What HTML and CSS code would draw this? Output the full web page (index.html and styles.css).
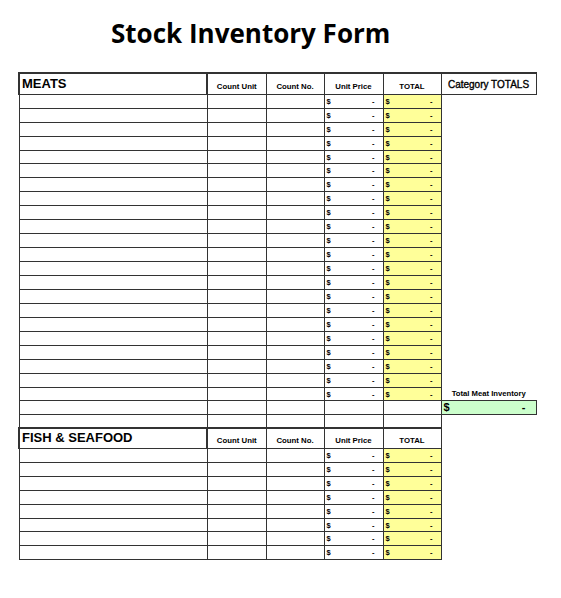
FILE: index.html
```html
<!DOCTYPE html>
<html>
<head>
<meta charset="utf-8">
<title>Stock Inventory Form</title>
<link rel="stylesheet" href="styles.css">
</head>
<body>
<div class="page">
  <h1 class="title">Stock Inventory Form</h1>
  <table class="sheet">
    <colgroup>
      <col class="c-a"><col class="c-b"><col class="c-c"><col class="c-d"><col class="c-e"><col class="c-f">
    </colgroup>
    <tbody>
      <tr class="hdr">
        <td class="section">MEATS</td>
        <th>Count Unit</th>
        <th>Count No.</th>
        <th>Unit Price</th>
        <th>TOTAL</th>
        <td class="cat">Category TOTALS</td>
      </tr>
      <tr class="r"><td></td><td></td><td></td><td class="money"><div class="m"><span>$</span><span>-</span></div></td><td class="money yel"><div class="m"><span>$</span><span>-</span></div></td><td class="free"></td></tr>
      <tr class="r"><td></td><td></td><td></td><td class="money"><div class="m"><span>$</span><span>-</span></div></td><td class="money yel"><div class="m"><span>$</span><span>-</span></div></td><td class="free"></td></tr>
      <tr class="r"><td></td><td></td><td></td><td class="money"><div class="m"><span>$</span><span>-</span></div></td><td class="money yel"><div class="m"><span>$</span><span>-</span></div></td><td class="free"></td></tr>
      <tr class="r"><td></td><td></td><td></td><td class="money"><div class="m"><span>$</span><span>-</span></div></td><td class="money yel"><div class="m"><span>$</span><span>-</span></div></td><td class="free"></td></tr>
      <tr class="r short"><td></td><td></td><td></td><td class="money"><div class="m"><span>$</span><span>-</span></div></td><td class="money yel"><div class="m"><span>$</span><span>-</span></div></td><td class="free"></td></tr>
      <tr class="r"><td></td><td></td><td></td><td class="money"><div class="m"><span>$</span><span>-</span></div></td><td class="money yel"><div class="m"><span>$</span><span>-</span></div></td><td class="free"></td></tr>
      <tr class="r"><td></td><td></td><td></td><td class="money"><div class="m"><span>$</span><span>-</span></div></td><td class="money yel"><div class="m"><span>$</span><span>-</span></div></td><td class="free"></td></tr>
      <tr class="r"><td></td><td></td><td></td><td class="money"><div class="m"><span>$</span><span>-</span></div></td><td class="money yel"><div class="m"><span>$</span><span>-</span></div></td><td class="free"></td></tr>
      <tr class="r"><td></td><td></td><td></td><td class="money"><div class="m"><span>$</span><span>-</span></div></td><td class="money yel"><div class="m"><span>$</span><span>-</span></div></td><td class="free"></td></tr>
      <tr class="r"><td></td><td></td><td></td><td class="money"><div class="m"><span>$</span><span>-</span></div></td><td class="money yel"><div class="m"><span>$</span><span>-</span></div></td><td class="free"></td></tr>
      <tr class="r"><td></td><td></td><td></td><td class="money"><div class="m"><span>$</span><span>-</span></div></td><td class="money yel"><div class="m"><span>$</span><span>-</span></div></td><td class="free"></td></tr>
      <tr class="r"><td></td><td></td><td></td><td class="money"><div class="m"><span>$</span><span>-</span></div></td><td class="money yel"><div class="m"><span>$</span><span>-</span></div></td><td class="free"></td></tr>
      <tr class="r"><td></td><td></td><td></td><td class="money"><div class="m"><span>$</span><span>-</span></div></td><td class="money yel"><div class="m"><span>$</span><span>-</span></div></td><td class="free"></td></tr>
      <tr class="r"><td></td><td></td><td></td><td class="money"><div class="m"><span>$</span><span>-</span></div></td><td class="money yel"><div class="m"><span>$</span><span>-</span></div></td><td class="free"></td></tr>
      <tr class="r"><td></td><td></td><td></td><td class="money"><div class="m"><span>$</span><span>-</span></div></td><td class="money yel"><div class="m"><span>$</span><span>-</span></div></td><td class="free"></td></tr>
      <tr class="r"><td></td><td></td><td></td><td class="money"><div class="m"><span>$</span><span>-</span></div></td><td class="money yel"><div class="m"><span>$</span><span>-</span></div></td><td class="free"></td></tr>
      <tr class="r"><td></td><td></td><td></td><td class="money"><div class="m"><span>$</span><span>-</span></div></td><td class="money yel"><div class="m"><span>$</span><span>-</span></div></td><td class="free"></td></tr>
      <tr class="r"><td></td><td></td><td></td><td class="money"><div class="m"><span>$</span><span>-</span></div></td><td class="money yel"><div class="m"><span>$</span><span>-</span></div></td><td class="free"></td></tr>
      <tr class="r"><td></td><td></td><td></td><td class="money"><div class="m"><span>$</span><span>-</span></div></td><td class="money yel"><div class="m"><span>$</span><span>-</span></div></td><td class="free"></td></tr>
      <tr class="r"><td></td><td></td><td></td><td class="money"><div class="m"><span>$</span><span>-</span></div></td><td class="money yel"><div class="m"><span>$</span><span>-</span></div></td><td class="free"></td></tr>
      <tr class="r"><td></td><td></td><td></td><td class="money"><div class="m"><span>$</span><span>-</span></div></td><td class="money yel"><div class="m"><span>$</span><span>-</span></div></td><td class="free"></td></tr>
      <tr class="r short"><td></td><td></td><td></td><td class="money"><div class="m"><span>$</span><span>-</span></div></td><td class="money yel"><div class="m"><span>$</span><span>-</span></div></td><td class="free label">Total Meat Inventory</td></tr>
      <tr class="r"><td></td><td></td><td></td><td></td><td></td><td class="grand"><div class="g"><span>$</span><span>-</span></div></td></tr>
      <tr class="r"><td></td><td></td><td></td><td></td><td class="open-right"></td><td class="free"></td></tr>
      <tr class="hdr fish">
        <td class="section">FISH &amp; SEAFOOD</td>
        <th>Count Unit</th>
        <th>Count No.</th>
        <th>Unit Price</th>
        <th>TOTAL</th>
        <td class="free"></td>
      </tr>
      <tr class="r"><td></td><td></td><td></td><td class="money"><div class="m"><span>$</span><span>-</span></div></td><td class="money yel"><div class="m"><span>$</span><span>-</span></div></td><td class="free"></td></tr>
      <tr class="r"><td></td><td></td><td></td><td class="money"><div class="m"><span>$</span><span>-</span></div></td><td class="money yel"><div class="m"><span>$</span><span>-</span></div></td><td class="free"></td></tr>
      <tr class="r"><td></td><td></td><td></td><td class="money"><div class="m"><span>$</span><span>-</span></div></td><td class="money yel"><div class="m"><span>$</span><span>-</span></div></td><td class="free"></td></tr>
      <tr class="r"><td></td><td></td><td></td><td class="money"><div class="m"><span>$</span><span>-</span></div></td><td class="money yel"><div class="m"><span>$</span><span>-</span></div></td><td class="free"></td></tr>
      <tr class="r"><td></td><td></td><td></td><td class="money"><div class="m"><span>$</span><span>-</span></div></td><td class="money yel"><div class="m"><span>$</span><span>-</span></div></td><td class="free"></td></tr>
      <tr class="r short"><td></td><td></td><td></td><td class="money"><div class="m"><span>$</span><span>-</span></div></td><td class="money yel"><div class="m"><span>$</span><span>-</span></div></td><td class="free"></td></tr>
      <tr class="r"><td></td><td></td><td></td><td class="money"><div class="m"><span>$</span><span>-</span></div></td><td class="money yel"><div class="m"><span>$</span><span>-</span></div></td><td class="free"></td></tr>
      <tr class="r"><td></td><td></td><td></td><td class="money"><div class="m"><span>$</span><span>-</span></div></td><td class="money yel"><div class="m"><span>$</span><span>-</span></div></td><td class="free"></td></tr>
    </tbody>
  </table>
</div>
</body>
</html>
```
FILE: styles.css
```css
html, body {
  margin: 0;
  padding: 0;
  background: #ffffff;
}

body {
  font-family: "Liberation Sans", Arial, sans-serif;
  color: #000000;
}

.page {
  padding-top: 18px;
}

.title {
  margin: 0 0 24px 111px;
  font-family: "Open Sans", "Noto Sans", sans-serif;
  font-weight: 700;
  font-size: 26px;
  line-height: 30px;
  color: #000000;
}

.sheet {
  margin-left: 18px;
  border-collapse: collapse;
  table-layout: fixed;
  width: 517px;
}

.c-a { width: 188px; }
.c-b { width: 59px; }
.c-c { width: 58px; }
.c-d { width: 59px; }
.c-e { width: 58px; }
.c-f { width: 95px; }

.sheet td,
.sheet th {
  border: 1px solid #333333;
  padding: 0;
  font-size: 8px;
  line-height: 9px;
}

.r { height: 14px; }
.r.short { height: 13px; }
.hdr { height: 21px; }
.hdr.fish { height: 20px; }

.hdr td,
.hdr th {
  border-top: 2px solid #333333;
}

.hdr th {
  font-weight: 700;
  font-size: 7.8px;
  text-align: center;
  vertical-align: bottom;
  padding-bottom: 3px;
}

.section {
  font-weight: 700;
  font-size: 13px !important;
  line-height: 14px !important;
  vertical-align: bottom;
  padding: 0 0 3px 2px !important;
  border-right: 2px solid #333333 !important;
  border-left: 2px solid #333333 !important;
  white-space: nowrap;
}

.cat {
  font-weight: 400;
  font-size: 10px !important;
  line-height: 12px !important;
  -webkit-text-stroke: 0.35px #000000;
  text-align: center;
  vertical-align: bottom;
  padding-bottom: 3px !important;
  white-space: nowrap;
}

.sheet td.free {
  border-top: none;
  border-right: none;
  border-bottom: none;
}

.sheet td.open-right {
  border-right: none;
}

.money {
  vertical-align: middle;
}

.m {
  display: flex;
  justify-content: space-between;
  padding: 1px 8px 0 2px;
  font-weight: 700;
  font-size: 7.5px;
  line-height: 9px;
}

.yel {
  background: #ffff99;
}

.label {
  font-weight: 700;
  font-size: 7.7px !important;
  text-align: center;
  vertical-align: middle;
  white-space: nowrap;
}

.grand {
  background: #ccffcc;
  vertical-align: middle;
}

.g {
  display: flex;
  justify-content: space-between;
  padding: 0 10px 0 2px;
  font-weight: 700;
  font-size: 11px;
  line-height: 12px;
}
```
